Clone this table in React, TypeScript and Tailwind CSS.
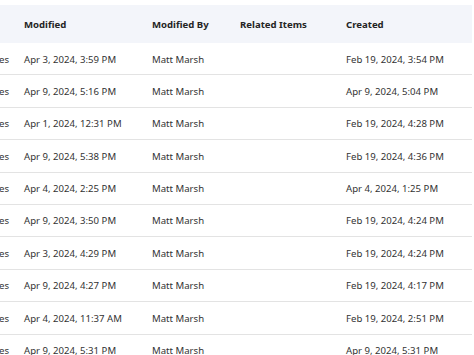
import React from "react";

const rows: [string, string][] = [
  ["Apr 3, 2024, 3:59 PM", "Feb 19, 2024, 3:54 PM"],
  ["Apr 9, 2024, 5:16 PM", "Apr 9, 2024, 5:04 PM"],
  ["Apr 1, 2024, 12:31 PM", "Feb 19, 2024, 4:28 PM"],
  ["Apr 9, 2024, 5:38 PM", "Feb 19, 2024, 4:36 PM"],
  ["Apr 4, 2024, 2:25 PM", "Apr 4, 2024, 1:25 PM"],
  ["Apr 9, 2024, 3:50 PM", "Feb 19, 2024, 4:24 PM"],
  ["Apr 3, 2024, 4:29 PM", "Feb 19, 2024, 4:24 PM"],
  ["Apr 9, 2024, 4:27 PM", "Feb 19, 2024, 4:17 PM"],
  ["Apr 4, 2024, 11:37 AM", "Feb 19, 2024, 2:51 PM"],
  ["Apr 9, 2024, 5:31 PM", "Apr 9, 2024, 5:31 PM"],
];

export default function App() {
  return (
    <div
      className="w-[474px] h-[355px] overflow-hidden bg-white pt-[5px] pr-[2px]"
      style={{ fontFamily: '"Noto Sans", "Open Sans", sans-serif' }}
    >
      <div className="flex h-[38px] items-center bg-[#f3f5fa] pt-[3px] text-[9.6px] font-bold text-[#242424]">
        <div className="w-[24px]" />
        <div className="w-[128px]">Modified</div>
        <div className="w-[88px]">Modified By</div>
        <div className="w-[106px]">Related Items</div>
        <div className="flex-1">Created</div>
      </div>
      {rows.map(([m, c], i) => (
        <div
          key={i}
          className="flex h-[32.4px] items-center border-b border-[#e3e3e3] pt-[2px] text-[9.6px] text-[#333333]"
        >
          <div className="w-[24px] overflow-hidden">
            <span className="-ml-[1px]">es</span>
          </div>
          <div className="w-[128px]">{m}</div>
          <div className="w-[88px]">Matt Marsh</div>
          <div className="w-[106px]" />
          <div className="flex-1">{c}</div>
        </div>
      ))}
    </div>
  );
}
